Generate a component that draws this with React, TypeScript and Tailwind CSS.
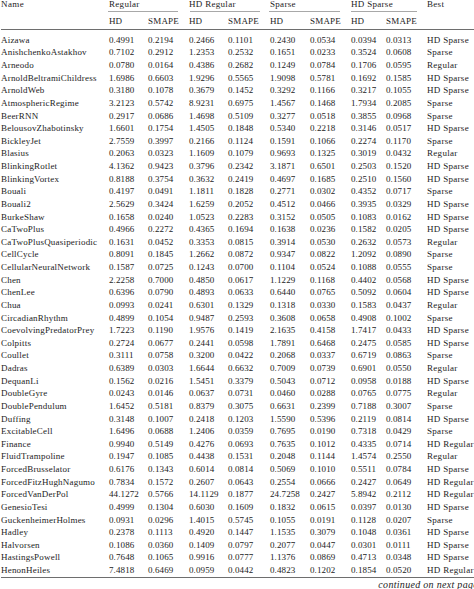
import React from 'react';

type Row = [string, string, string, string, string, string, string, string, string, string];

// name, regular HD/SMAPE, HD regular HD/SMAPE, sparse HD/SMAPE, HD sparse HD/SMAPE, best
const rows: Row[] = [
  ['Aizawa', '0.4991', '0.2194', '0.2466', '0.1101', '0.2430', '0.0534', '0.0394', '0.0313', 'HD Sparse'],
  ['AnishchenkoAstakhov', '0.7102', '0.2912', '1.2353', '0.2532', '0.1651', '0.0233', '0.3524', '0.0608', 'Sparse'],
  ['Arneodo', '0.0780', '0.0164', '0.4386', '0.2682', '0.1249', '0.0784', '0.1706', '0.0595', 'Regular'],
  ['ArnoldBeltramiChildress', '1.6986', '0.6603', '1.9296', '0.5565', '1.9098', '0.5781', '0.1692', '0.1585', 'HD Sparse'],
  ['ArnoldWeb', '0.3180', '0.1078', '0.3679', '0.1452', '0.3292', '0.1166', '0.3217', '0.1055', 'HD Sparse'],
  ['AtmosphericRegime', '3.2123', '0.5742', '8.9231', '0.6975', '1.4567', '0.1468', '1.7934', '0.2085', 'Sparse'],
  ['BeerRNN', '0.2917', '0.0686', '1.4698', '0.5109', '0.3277', '0.0518', '0.3855', '0.0968', 'Sparse'],
  ['BelousovZhabotinsky', '1.6601', '0.1754', '1.4505', '0.1848', '0.5340', '0.2218', '0.3146', '0.0517', 'HD Sparse'],
  ['BickleyJet', '2.7559', '0.3997', '0.2166', '0.1124', '0.1591', '0.1066', '0.2274', '0.1170', 'Sparse'],
  ['Blasius', '0.2063', '0.0323', '1.1609', '0.1079', '0.9693', '0.1325', '0.3019', '0.0432', 'Regular'],
  ['BlinkingRotlet', '4.1362', '0.9423', '0.3796', '0.2342', '3.1871', '0.6501', '0.2503', '0.1520', 'HD Sparse'],
  ['BlinkingVortex', '0.8188', '0.3754', '0.3632', '0.2419', '0.4697', '0.1685', '0.2510', '0.1560', 'HD Sparse'],
  ['Bouali', '0.4197', '0.0491', '1.1811', '0.1828', '0.2771', '0.0302', '0.4352', '0.0717', 'Sparse'],
  ['Bouali2', '2.5629', '0.3424', '1.6259', '0.2052', '0.4512', '0.0466', '0.3935', '0.0329', 'HD Sparse'],
  ['BurkeShaw', '0.1658', '0.0240', '1.0523', '0.2283', '0.3152', '0.0505', '0.1083', '0.0162', 'HD Sparse'],
  ['CaTwoPlus', '0.4966', '0.2272', '0.4365', '0.1694', '0.1638', '0.0236', '0.1582', '0.0205', 'HD Sparse'],
  ['CaTwoPlusQuasiperiodic', '0.1631', '0.0452', '0.3353', '0.0815', '0.3914', '0.0530', '0.2632', '0.0573', 'Regular'],
  ['CellCycle', '0.8091', '0.1845', '1.2662', '0.0872', '0.9347', '0.0822', '1.2092', '0.0890', 'Sparse'],
  ['CellularNeuralNetwork', '0.1587', '0.0725', '0.1243', '0.0700', '0.1104', '0.0524', '0.1088', '0.0555', 'Sparse'],
  ['Chen', '2.2258', '0.7000', '0.4850', '0.0617', '1.1229', '0.1168', '0.4402', '0.0568', 'HD Sparse'],
  ['ChenLee', '0.6396', '0.0790', '0.4893', '0.0633', '0.6440', '0.0765', '0.5092', '0.0604', 'HD Sparse'],
  ['Chua', '0.0993', '0.0241', '0.6301', '0.1329', '0.1318', '0.0330', '0.1583', '0.0437', 'Regular'],
  ['CircadianRhythm', '0.4899', '0.1054', '0.9487', '0.2593', '0.3608', '0.0658', '0.4908', '0.1002', 'Sparse'],
  ['CoevolvingPredatorPrey', '1.7223', '0.1190', '1.9576', '0.1419', '2.1635', '0.4158', '1.7417', '0.0433', 'HD Sparse'],
  ['Colpitts', '0.2724', '0.0677', '0.2441', '0.0598', '1.7891', '0.6468', '0.2475', '0.0585', 'HD Sparse'],
  ['Coullet', '0.3111', '0.0758', '0.3200', '0.0422', '0.2068', '0.0337', '0.6719', '0.0863', 'Sparse'],
  ['Dadras', '0.6389', '0.0303', '1.6644', '0.6632', '0.7009', '0.0739', '0.6901', '0.0550', 'Regular'],
  ['DequanLi', '0.1562', '0.0216', '1.5451', '0.3379', '0.5043', '0.0712', '0.0958', '0.0188', 'HD Sparse'],
  ['DoubleGyre', '0.0243', '0.0146', '0.0637', '0.0731', '0.0460', '0.0288', '0.0765', '0.0775', 'Regular'],
  ['DoublePendulum', '1.6452', '0.5181', '0.8379', '0.3075', '0.6631', '0.2399', '0.7188', '0.3007', 'Sparse'],
  ['Duffing', '0.3148', '0.1007', '0.2418', '0.1203', '1.5590', '0.5396', '0.2119', '0.0814', 'HD Sparse'],
  ['ExcitableCell', '1.6496', '0.0688', '1.2406', '0.0359', '0.7695', '0.0190', '0.7318', '0.0429', 'Sparse'],
  ['Finance', '0.9940', '0.5149', '0.4276', '0.0693', '0.7635', '0.1012', '0.4335', '0.0714', 'HD Regular'],
  ['FluidTrampoline', '0.1947', '0.1085', '0.4438', '0.1531', '0.2048', '0.1144', '1.4574', '0.2550', 'Regular'],
  ['ForcedBrusselator', '0.6176', '0.1343', '0.6014', '0.0814', '0.5069', '0.1010', '0.5511', '0.0784', 'HD Sparse'],
  ['ForcedFitzHughNagumo', '0.7834', '0.1572', '0.2607', '0.0643', '0.2554', '0.0666', '0.2427', '0.0649', 'HD Regular'],
  ['ForcedVanDerPol', '44.1272', '0.5766', '14.1129', '0.1877', '24.7258', '0.2427', '5.8942', '0.2112', 'HD Regular'],
  ['GenesioTesi', '0.4999', '0.1304', '0.6030', '0.1609', '0.1832', '0.0615', '0.0397', '0.0130', 'HD Sparse'],
  ['GuckenheimerHolmes', '0.0931', '0.0296', '1.4015', '0.5745', '0.1055', '0.0191', '0.1128', '0.0207', 'Sparse'],
  ['Hadley', '0.2378', '0.1113', '0.4920', '0.1447', '1.1535', '0.3079', '0.1048', '0.0361', 'HD Sparse'],
  ['Halvorsen', '0.1086', '0.0360', '0.1409', '0.0797', '0.2077', '0.0447', '0.0301', '0.0111', 'HD Sparse'],
  ['HastingsPowell', '0.7648', '0.1065', '0.9916', '0.0777', '1.1376', '0.0869', '0.4713', '0.0348', 'HD Sparse'],
  ['HenonHeiles', '7.4818', '0.6469', '0.0959', '0.0442', '0.4823', '0.1202', '0.1854', '0.0520', 'HD Regular'],
];

const groups = ['Regular', 'HD Regular', 'Sparse', 'HD Sparse'];

// one template for every row so the columns line up
const cols = 'grid grid-cols-[108px_39px_41px_39px_42px_40px_41px_35px_41px_90px]';

export default function App() {
  return (
    <div className="w-[474px] h-[589px] overflow-hidden bg-white">
      <div
        className="w-[478px] pl-[1px] -mt-[2px] text-[9px] text-[#1c1c1c] leading-none"
        style={{ fontFamily: '"Liberation Serif", "Times New Roman", serif' }}
      >
        {/* Group headers */}
        <div className={`${cols} h-[13px] items-center`}>
          <div className="tracking-[0.4px]">Name</div>
          {groups.map((g) => (
            <div key={g} className="col-span-2 tracking-[0.3px]">
              {g}
            </div>
          ))}
          <div className="tracking-[0.3px]">Best</div>
        </div>

        {/* cmidrules under each group */}
        <div className={`${cols} h-[4px] items-start`}>
          <div />
          <div className="col-span-2 mr-[11px] -ml-[1px] h-px bg-[#a8a8a8]" />
          <div className="col-span-2 mr-[10px] ml-[1px] h-px bg-[#a8a8a8]" />
          <div className="col-span-2 mr-[11px] -ml-[1px] h-px bg-[#a8a8a8]" />
          <div className="col-span-2 mr-[10px] h-px bg-[#a8a8a8]" />
        </div>

        {/* HD / SMAPE */}
        <div className={`${cols} h-[13px] items-center`}>
          <div />
          {groups.map((g) => (
            <React.Fragment key={g}>
              <div>HD</div>
              <div className="tracking-[0.2px]">SMAPE</div>
            </React.Fragment>
          ))}
          <div />
        </div>

        <div className="h-px bg-[#6e6e6e] mt-[0.5px] mb-[4.5px]" />

        {/* Body */}
        <div className={`${cols} auto-rows-[12.64px] items-center`}>
          {rows.map((r) => (
            <React.Fragment key={r[0]}>
              <div className="tracking-[0.2px] whitespace-nowrap">{r[0]}</div>
              {r.slice(1, 9).map((v, i) => (
                <div key={i} className="whitespace-nowrap tracking-[0.1px]">
                  {v}
                </div>
              ))}
              <div className="whitespace-nowrap tracking-[0.3px]">{r[9]}</div>
            </React.Fragment>
          ))}
        </div>

        <div className="h-px bg-[#6e6e6e] mt-[0.5px]" />

        <div className="pt-[2px] text-right italic text-[10px] tracking-[0.3px] whitespace-nowrap">
          continued on next page
        </div>
      </div>
    </div>
  );
}
